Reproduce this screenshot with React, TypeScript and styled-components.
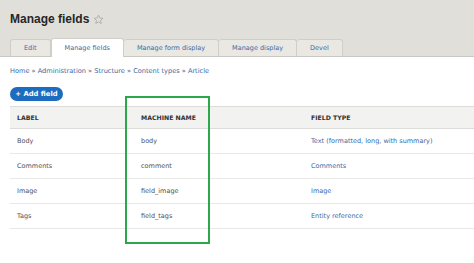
import React from 'react';
import styled, { createGlobalStyle } from 'styled-components';

const GlobalStyle = createGlobalStyle`
    html {
        overflow: hidden;
    }
    body {
        margin: 0;
        padding: 0;
        min-height: 263px;
        background: #ffffff;
        font-family: "DejaVu Sans", "Liberation Sans", sans-serif;
        -webkit-font-smoothing: antialiased;
    }
`;

interface IField {
    label: string;
    machine: string;
    type: string;
}

const fields: IField[] = [
    { label: 'Body', machine: 'body', type: 'Text (formatted, long, with summary)' },
    { label: 'Comments', machine: 'comment', type: 'Comments' },
    { label: 'Image', machine: 'field_image', type: 'Image' },
    { label: 'Tags', machine: 'field_tags', type: 'Entity reference' },
];

const tabs = ['Edit', 'Manage fields', 'Manage form display', 'Manage display', 'Devel'];

const StarIcon = () => (
    <svg width="11" height="11" viewBox="0 0 24 24" fill="none">
        <path
            d="M12 2.5l2.9 6.2 6.6.7-5 4.5 1.4 6.6L12 17.2l-5.9 3.3 1.4-6.6-5-4.5 6.6-.7z"
            stroke="#a3a29c"
            strokeWidth="1.6"
            strokeLinejoin="round"
        />
    </svg>
);

const App = () => {
    return (
        <>
            <GlobalStyle />
            <StHeader>
                <StTitle>
                    <h1>Manage fields</h1>
                    <StarIcon />
                </StTitle>
                <StTabs>
                    {tabs.map((t) => (
                        <StTab key={t} active={t === 'Manage fields'}>
                            {t}
                        </StTab>
                    ))}
                </StTabs>
            </StHeader>
            <StContent>
                <StBreadcrumb>
                    <a>Home</a> » <a>Administration</a> » <a>Structure</a> »{' '}
                    <a>Content types</a> » <a>Article</a>
                </StBreadcrumb>
                <StButton>+ Add field</StButton>
                <StTable>
                    <StHeadRow>
                        <span>Label</span>
                        <span>Machine name</span>
                        <span>Field type</span>
                    </StHeadRow>
                    {fields.map((f) => (
                        <StRow key={f.machine}>
                            <span>{f.label}</span>
                            <span>{f.machine}</span>
                            <a>{f.type}</a>
                        </StRow>
                    ))}
                </StTable>
                <StHighlight />
            </StContent>
        </>
    );
};

const StHeader = styled.div`
    background: #e0dfd9;
    padding: 10px 0 0 10px;
    border-bottom: 1px solid #c8c7c1;
`;

const StTitle = styled.div`
    display: flex;
    align-items: center;
    gap: 4px;
    height: 18px;

    h1 {
        margin: 0;
        font-family: "Liberation Sans", Arial, sans-serif;
        font-size: 12px;
        font-weight: bold;
        color: #262626;
    }
`;

const StTabs = styled.div`
    display: flex;
    align-items: flex-end;
    height: 28px;
`;

const StTab = styled.div<{ active?: boolean }>`
    height: ${({ active }) => (active ? '19px' : '17px')};
    margin-bottom: ${({ active }) => (active ? '-1px' : '0')};
    display: flex;
    align-items: center;
    justify-content: center;
    padding: 0 13px;
    font-size: 6.5px;
    color: #3a68a3;
    background: ${({ active }) => (active ? '#ffffff' : '#e9e8e3')};
    border: 1px solid #cfcec8;
    border-bottom: none;
    border-left: ${({ active }) => (active ? '1px solid #cfcec8' : 'none')};
    border-radius: 3px 3px 0 0;
    box-sizing: border-box;

    &:first-child {
        border-left: 1px solid #cfcec8;
    }
`;

const StContent = styled.div`
    position: relative;
    padding: 0 0 0 10px;
`;

const StBreadcrumb = styled.div`
    padding-top: 10px;
    height: 11px;
    font-size: 6.6px;
    color: #555;

    a {
        color: #3a68a3;
    }
`;

const StButton = styled.button`
    display: block;
    margin-top: 9px;
    height: 14px;
    width: 53px;
    padding: 0;
    border: none;
    border-radius: 7px;
    background: #1c6dc0;
    color: #fff;
    font-family: inherit;
    font-size: 6.8px;
    font-weight: bold;
`;

const StTable = styled.div`
    margin-top: 5px;
`;

const StHeadRow = styled.div`
    display: grid;
    grid-template-columns: 124px 170px 1fr;
    align-items: center;
    height: 21px;
    padding-left: 7px;
    background: #f2f2f0;
    border-top: 1px solid #dcdcd8;
    border-bottom: 1px solid #dcdcd8;
    font-size: 6.2px;
    font-weight: bold;
    text-transform: uppercase;
    color: #333;
`;

const StRow = styled.div`
    display: grid;
    grid-template-columns: 124px 170px 1fr;
    align-items: center;
    height: 24px;
    padding-left: 7px;
    border-bottom: 1px solid #e8e8e6;
    font-size: 6.5px;
    color: #505050;

    a {
        color: #3a68a3;
    }
`;

const StHighlight = styled.div`
    position: absolute;
    left: 125px;
    top: 39px;
    width: 81px;
    height: 144px;
    border: 2px solid #2aa84a;
    pointer-events: none;
`;

export default App;
